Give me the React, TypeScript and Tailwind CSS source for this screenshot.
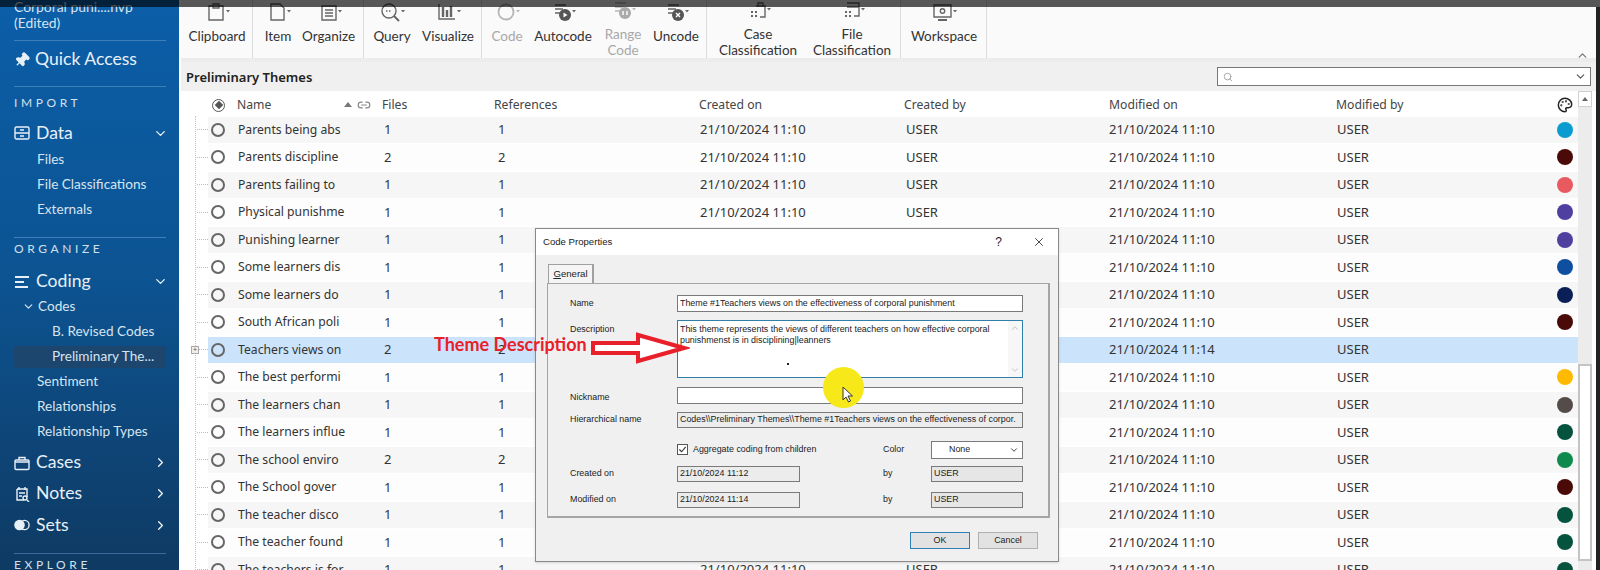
import { ChevronDown, ChevronRight, ChevronUp, Link2, Palette, Pin, Search, X } from 'lucide-react';
import type { ReactNode } from 'react';

const rows = [
  { name: 'Parents being abs', files: 1, refs: 1, color: '#0a9bd0' },
  { name: 'Parents discipline', files: 2, refs: 2, color: '#4a0a08' },
  { name: 'Parents failing to', files: 1, refs: 1, color: '#e85a5f' },
  { name: 'Physical punishme', files: 1, refs: 1, color: '#4f3f9f' },
  { name: 'Punishing learner', files: 1, refs: 1, color: '#4f3f9f' },
  { name: 'Some learners dis', files: 1, refs: 1, color: '#0f4f9f' },
  { name: 'Some learners do', files: 1, refs: 1, color: '#0a1f55' },
  { name: 'South African poli', files: 1, refs: 1, color: '#4a0a08' },
  { name: 'Teachers views on', files: 2, refs: 2, color: '' },
  { name: 'The best performi', files: 1, refs: 1, color: '#ffb900' },
  { name: 'The learners chan', files: 1, refs: 1, color: '#544c48' },
  { name: 'The learners influe', files: 1, refs: 1, color: '#05533f' },
  { name: 'The school enviro', files: 2, refs: 2, color: '#0f8a4c' },
  { name: 'The School gover', files: 1, refs: 1, color: '#4a0a08' },
  { name: 'The teacher disco', files: 1, refs: 1, color: '#05533f' },
  { name: 'The teacher found', files: 1, refs: 1, color: '#05533f' },
  { name: 'The teachers is for', files: 1, refs: 1, color: '#05533f' },
];

function Ico({ children, muted }: { children: ReactNode; muted?: boolean }) {
  return (
    <svg
      viewBox="0 0 30 20"
      className={`h-[20px] w-[30px] ${muted ? 'text-[#b5b5b5]' : 'text-[#666]'}`}
      fill="none"
      stroke="currentColor"
      strokeWidth="1.4"
    >
      {children}
      <path d="M24 8h4l-2 2.5z" fill="currentColor" stroke="none" />
    </svg>
  );
}

function Tool({ label, width, icon, muted }: { label: ReactNode; width: string; icon: ReactNode; muted?: boolean }) {
  return (
    <div className={`flex shrink-0 flex-col items-center ${width}`}>
      <div className="flex h-[28px] items-end pb-[6px]">{icon}</div>
      <div className={`text-center leading-[16px] ${muted ? 'text-[#a8a8a8]' : 'text-[#333]'}`}>{label}</div>
    </div>
  );
}

function Ribbon() {
  const group = 'flex h-[58px] shrink-0 border-r border-[#dcdcdc]';
  return (
    <div className="relative h-[62px] shrink-0 border-b-4 border-[#ececec] bg-[#fafafa] font-['Lato',sans-serif] text-[13.5px]">
      <div className="flex">
        <div className={`${group} w-[72px]`}>
          <Tool
            width="w-[72px]"
            label="Clipboard"
            icon={
              <Ico>
                <path d="M7 4h14v14H7z" />
                <path d="M11 2h6v4h-6z" />
              </Ico>
            }
          />
        </div>
        <div className={`${group} w-[111px]`}>
          <Tool
            width="w-[50px]"
            label="Item"
            icon={
              <Ico>
                <path d="M8 2h9l4 4v12H8z" />
              </Ico>
            }
          />
          <Tool
            width="w-[51px]"
            label="Organize"
            icon={
              <Ico>
                <path d="M8 4h14v14H8z" />
                <path d="M11 8h8M11 11h8M11 14h8" />
              </Ico>
            }
          />
        </div>
        <div className={`${group} w-[118px]`}>
          <Tool
            width="w-[56px]"
            label="Query"
            icon={
              <Ico>
                <circle cx="12" cy="9" r="7" />
                <path d="M17 14l5 5" strokeWidth="2" />
                <path d="M9 9h6" strokeDasharray="1.5 1.5" />
              </Ico>
            }
          />
          <Tool
            width="w-[56px]"
            label="Visualize"
            icon={
              <Ico>
                <path d="M6 2v15h16" />
                <path d="M10 5v10M14 8v7M18 4v11" strokeWidth="2.4" />
              </Ico>
            }
          />
        </div>
        <div className={`${group} w-[225px]`}>
          <Tool
            muted
            width="w-[50px]"
            label="Code"
            icon={
              <Ico muted>
                <circle cx="14" cy="10" r="7.5" strokeWidth="1.8" />
              </Ico>
            }
          />
          <Tool
            width="w-[62px]"
            label="Autocode"
            icon={
              <Ico>
                <path d="M7 3h11M7 7h8M7 11h5" />
                <circle cx="17" cy="13" r="6" fill="#555" stroke="none" />
                <path d="M15.5 10.5v5l4-2.5z" fill="#fff" stroke="none" />
              </Ico>
            }
          />
          <Tool
            muted
            width="w-[58px]"
            label={
              <>
                Range
                <br />
                Code
              </>
            }
            icon={
              <Ico muted>
                <path d="M7 3h11M7 7h8M7 11h5" />
                <circle cx="17" cy="13" r="6" fill="#aaa" stroke="none" />
                <path d="M15 11v4M19 11v4" stroke="#fff" />
              </Ico>
            }
          />
          <Tool
            width="w-[48px]"
            label="Uncode"
            icon={
              <Ico>
                <path d="M7 3h11M7 7h8M7 11h5" />
                <circle cx="17" cy="13" r="6" fill="#555" stroke="none" />
                <path d="M15 11l4 4M19 11l-4 4" stroke="#fff" />
              </Ico>
            }
          />
        </div>
        <div className={`${group} w-[194px]`}>
          <Tool
            width="w-[102px]"
            label={
              <>
                Case
                <br />
                Classification
              </>
            }
            icon={
              <Ico>
                <path d="M13 6h9v11h-5M15 6V3h5v3" />
                <path d="M8 11h2v2H8zM12 11h2v2h-2zM8 15h2v2H8zM12 15h2v2h-2z" fill="currentColor" stroke="none" />
              </Ico>
            }
          />
          <Tool
            width="w-[86px]"
            label={
              <>
                File
                <br />
                Classification
              </>
            }
            icon={
              <Ico>
                <path d="M10 3h12v13h-5M10 7h12" />
                <path d="M8 11h2v2H8zM12 11h2v2h-2zM8 15h2v2H8zM12 15h2v2h-2z" fill="currentColor" stroke="none" />
              </Ico>
            }
          />
        </div>
        <div className={`${group} w-[86px]`}>
          <Tool
            width="w-[86px]"
            label="Workspace"
            icon={
              <Ico>
                <path d="M5 3h17v12H5z" />
                <circle cx="13.5" cy="9" r="2.2" />
                <path d="M9 18h9" strokeWidth="2" />
              </Ico>
            }
          />
        </div>
        <div className="flex h-[58px] flex-1 items-start justify-end pr-[11px] pt-[49px] text-[#777]">
          <ChevronUp size={13} strokeWidth={2.4} />
        </div>
      </div>
    </div>
  );
}

function SideIcon({ children }: { children: ReactNode }) {
  return (
    <svg viewBox="0 0 16 16" className="h-[16px] w-[16px] shrink-0" fill="none" stroke="currentColor" strokeWidth="1.4">
      {children}
    </svg>
  );
}

function SideGroup({ icon, label, open, y }: { icon: ReactNode; label: string; open?: boolean; y: string }) {
  return (
    <div className={`flex shrink-0 items-center text-[17.6px] ${y}`}>
      <span className="flex w-[22px] items-center">{icon}</span>
      <span className="flex-1">{label}</span>
      <span className="mr-[-2px]">
        {open ? <ChevronDown size={15} strokeWidth={2.2} /> : <ChevronRight size={15} strokeWidth={2.2} />}
      </span>
    </div>
  );
}

function SideLink({ label, indent }: { label: string; indent: string }) {
  return <div className={`flex h-[25px] shrink-0 items-center text-[13.6px] text-[#d6e4f0] ${indent}`}>{label}</div>;
}

function Sidebar() {
  const heading = 'h-[18px] shrink-0 text-[12px] leading-[18px] tracking-[0.3em] text-[#d2e0ec]';
  return (
    <div className="flex h-[570px] w-[179px] shrink-0 flex-col overflow-hidden bg-gradient-to-b from-[#0b5ea8] via-[#0c5391] to-[#0e3a63] pl-[14px] pr-[13px] font-['Lato',sans-serif] text-[#e8f0f7]">
      <div className="h-[41px] shrink-0 border-b border-[#3d7fb8] text-[13.9px] leading-[16px] text-[#d6e4f0]">
        <div className="mt-[-1px]">Corporal puni....nvp</div>
        <div>(Edited)</div>
      </div>
      <div className="flex h-[46px] shrink-0 items-center gap-[5px] border-b border-[#3d7fb8] pb-[8px] text-[17.6px]">
        <Pin size={16} fill="currentColor" className="rotate-45" />
        <span>Quick Access</span>
      </div>
      <div className={`mt-[7px] ${heading}`}>IMPORT</div>
      <SideGroup
        y="mt-[9px] h-[24px]"
        label="Data"
        open
        icon={
          <SideIcon>
            <rect x="1" y="2" width="14" height="12" rx="1.5" />
            <path d="M1 8h14M6 5h4M6 11h4" />
          </SideIcon>
        }
      />
      <div className="mt-[2px] flex shrink-0 flex-col">
        <SideLink label="Files" indent="pl-[23px]" />
        <SideLink label="File Classifications" indent="pl-[23px]" />
        <SideLink label="Externals" indent="pl-[23px]" />
      </div>
      <div className="mt-[14.5px] shrink-0 border-t border-[#3d7fb8]" />
      <div className={`mt-[2px] ${heading}`}>ORGANIZE</div>
      <SideGroup
        y="mt-[12px] h-[24px]"
        label="Coding"
        open
        icon={
          <SideIcon>
            <path d="M1 3h14M1 8h9M1 13h13" strokeWidth="2.2" />
          </SideIcon>
        }
      />
      <div className="flex h-[25px] shrink-0 items-center gap-[3px] pl-[8px] text-[13.6px] text-[#d6e4f0]">
        <ChevronDown size={13} strokeWidth={2.2} />
        <span>Codes</span>
      </div>
      <SideLink label="B. Revised Codes" indent="pl-[38px]" />
      <div className="mt-[2px] flex h-[22px] shrink-0 items-center rounded-[2px] bg-[#1d466f] pl-[38px] text-[13.6px] text-[#d6e4f0]">
        Preliminary The...
      </div>
      <div className="mt-[1px] flex shrink-0 flex-col">
        <SideLink label="Sentiment" indent="pl-[23px]" />
        <SideLink label="Relationships" indent="pl-[23px]" />
        <SideLink label="Relationship Types" indent="pl-[23px]" />
      </div>
      <SideGroup
        y="mt-[3.5px] h-[31px]"
        label="Cases"
        icon={
          <SideIcon>
            <rect x="1" y="5" width="14" height="9.500" rx="1" />
            <path d="M5 5V2.500h6V5M1 7h14" />
          </SideIcon>
        }
      />
      <SideGroup
        y="h-[31px]"
        label="Notes"
        icon={
          <SideIcon>
            <path d="M3 3h10v8M3 3v11h7" />
            <path d="M5 1v3M11 1v3M5 7h6M5 10h3" />
            <circle cx="11" cy="12" r="2" />
            <path d="M13 14l2 2" />
          </SideIcon>
        }
      />
      <SideGroup
        y="h-[32px]"
        label="Sets"
        icon={
          <SideIcon>
            <circle cx="5.500" cy="8" r="4.600" fill="currentColor" />
            <circle cx="10.500" cy="8" r="4.600" />
          </SideIcon>
        }
      />
      <div className="mt-[11.5px] shrink-0 border-t border-[#3a6a97]" />
      <div className={`mt-[2px] ${heading}`}>EXPLORE</div>
    </div>
  );
}

function Circle() {
  return <span className="block h-[14px] w-[14px] rounded-full border-2 border-[#666]" />;
}

function Table() {
  return (
    <div className="relative flex-1 overflow-hidden bg-white font-['Noto_Sans',sans-serif] text-[13px] text-[#333]">
      <div className="flex h-[25px] items-center pl-[19px] pt-[3px] text-[12.2px] text-[#444]">
        <span className="flex w-[37px] justify-start pl-[12px]">
          <span className="flex h-[13px] w-[13px] items-center justify-center rounded-full border border-[#555]">
            <span className="h-[6px] w-[6px] rotate-45 bg-[#555]" />
          </span>
        </span>
        <span className="flex w-[145px] items-center">
          <span className="flex-1">Name</span>
          <span className="mr-[5px] h-0 w-0 border-x-[4px] border-b-[5px] border-x-transparent border-b-[#777]" />
          <Link2 size={14} className="mr-[11px] text-[#888]" />
        </span>
        <span className="w-[112px]">Files</span>
        <span className="w-[205px]">References</span>
        <span className="w-[205px]">Created on</span>
        <span className="w-[205px]">Created by</span>
        <span className="w-[227px]">Modified on</span>
        <span className="w-[221px]">Modified by</span>
        <Palette size={16} strokeWidth={2.2} className="text-[#222]" />
      </div>
      <div className="ml-[14px] border-l border-dotted border-[#c4c4c4]">
        {rows.map((row, i) => {
          const selected = row.name.startsWith('Teachers');
          const band = selected ? 'bg-[#cce4fb]' : i % 2 === 0 ? 'bg-[#f6f6f6]' : 'bg-[#fdfdfd]';
          return (
            <div key={row.name} className="flex h-[27.5px] items-center">
              <div className="relative flex w-[12px] shrink-0 items-center">
                <span className="ml-[1px] w-[11px] border-t border-dotted border-[#bbb]" />
                {selected && (
                  <span className="absolute left-[-5px] flex h-[8px] w-[8px] items-center justify-center border border-[#aaa] bg-[#eee] text-[7px] leading-none text-[#555]">
                    +
                  </span>
                )}
              </div>
              <div className={`flex h-[26px] flex-1 items-center ${band}`}>
                <span className="flex w-[30px] justify-start pl-[3px]">
                  <Circle />
                </span>
                <span className="w-[145px] text-[12.2px]">{row.name}</span>
                <span className="w-[112px] pl-[1px]">{row.files}</span>
                <span className="w-[205px] pl-[3px]">{row.refs}</span>
                <span className="w-[206px]">21/10/2024 11:10</span>
                <span className="w-[203px]">USER</span>
                <span className="w-[228px]">{selected ? '21/10/2024 11:14' : '21/10/2024 11:10'}</span>
                <span className="w-[220px]">USER</span>
                {row.color && <span className="h-[16px] w-[16px] rounded-full" style={{ backgroundColor: row.color }} />}
              </div>
            </div>
          );
        })}
      </div>
    </div>
  );
}

function Scrollbar() {
  return (
    <div className="flex w-[14px] shrink-0 flex-col bg-[#ececec]">
      <div className="flex h-[16px] items-center justify-center border border-[#d0d0d0] bg-white">
        <span className="h-0 w-0 border-x-[3px] border-b-[4px] border-x-transparent border-b-[#666]" />
      </div>
      <div className="mt-[257px] h-[197px] border-2 border-[#c4c4c4] bg-white" />
    </div>
  );
}

function Field({ children, className }: { children?: ReactNode; className: string }) {
  return (
    <div className={`flex items-center overflow-hidden whitespace-nowrap border border-[#7a7a7a] px-[2px] ${className}`}>
      {children}
    </div>
  );
}

function Dialog() {
  const label = 'w-[107px] shrink-0';
  return (
    <div className="absolute left-[535px] top-[228px] h-[334px] w-[524px] border border-[#8a8a8a] bg-[#f0f0f0] font-['Liberation_Sans',sans-serif] text-[8.9px] text-[#222] shadow-sm">
      <div className="flex h-[26px] items-center justify-between bg-white pl-[7px] pr-[12px] text-[9.6px]">
        <span>Code Properties</span>
        <div className="flex items-center gap-[30px]">
          <span className="text-[12px]">?</span>
          <X size={14} strokeWidth={1.4} />
        </div>
      </div>
      <div className="pl-[11px] pr-[8px] pt-[9px]">
        <div className="ml-[1px] flex h-[19px] w-[46px] items-center justify-center border-l border-r-2 border-t border-[#a0a0a0] bg-[#f5f5f5] text-[9.6px]">
          <span>
            <span className="underline">G</span>eneral
          </span>
        </div>
        <div className="flex h-[235px] flex-col border-b-2 border-l border-r-2 border-t border-[#a5a5a5] pl-[22px] pt-[11px]">
          <div className="flex h-[17px] items-center">
            <span className={label}>Name</span>
            <Field className="h-[17px] w-[346px] bg-white">Theme #1Teachers views on the effectiveness of corporal punishment</Field>
          </div>
          <div className="mt-[8px] flex h-[58px]">
            <span className={`${label} pt-[3px]`}>Description</span>
            <div className="flex h-[58px] w-[346px] border border-[#2f7fa8] bg-white">
              <div className="flex-1 whitespace-nowrap pl-[2px] pt-[3px] leading-[11px]">
                This theme represents the views of different teachers on how effective corporal
                <br />
                punishmenst is in disciplining|leanners
              </div>
              <div className="flex w-[14px] flex-col items-center justify-between bg-[#f7f7f7] py-[2px] text-[#bbb]">
                <ChevronUp size={10} />
                <ChevronDown size={10} />
              </div>
            </div>
          </div>
          <div className="mt-[9px] flex h-[17px] items-center">
            <span className={`${label} pt-[5px]`}>Nickname</span>
            <Field className="h-[17px] w-[346px] bg-white" />
          </div>
          <div className="mt-[8px] flex h-[16px] items-center">
            <span className={label}>Hierarchical name</span>
            <Field className="h-[16px] w-[346px] bg-[#ececec]">Codes\\Preliminary Themes\\Theme #1Teachers views on the effectiveness of corpor.</Field>
          </div>
          <div className="mt-[13px] flex h-[18px] items-center">
            <span className={label} />
            <span className="flex w-[206px] items-center gap-[5px]">
              <span className="flex h-[11px] w-[11px] items-center justify-center border border-[#555] bg-white">
                <svg viewBox="0 0 10 10" className="h-[9px] w-[9px]" fill="none" stroke="#333" strokeWidth="1.2">
                  <path d="M1.500 5l2.500 2.500L8.500 2" />
                </svg>
              </span>
              Aggregate coding from children
            </span>
            <span className="w-[48px]">Color</span>
            <Field className="h-[18px] w-[92px] justify-between bg-white pl-[17px] pr-[3px]">
              None
              <ChevronDown size={10} />
            </Field>
          </div>
          <div className="mt-[7px] flex h-[16px] items-center">
            <span className={label}>Created on</span>
            <Field className="h-[16px] w-[123px] bg-[#ececec]">21/10/2024 11:12</Field>
            <span className="ml-[83px] w-[48px]">by</span>
            <Field className="h-[16px] w-[92px] bg-[#e6e6e6]">USER</Field>
          </div>
          <div className="mt-[10px] flex h-[16px] items-center">
            <span className={label}>Modified on</span>
            <Field className="h-[16px] w-[123px] bg-[#ececec]">21/10/2024 11:14</Field>
            <span className="ml-[83px] w-[48px]">by</span>
            <Field className="h-[16px] w-[92px] bg-[#e6e6e6]">USER</Field>
          </div>
        </div>
        <div className="mt-[14px] flex justify-end gap-[8px] pr-[12px]">
          <div className="flex h-[17px] w-[60px] items-center justify-center border border-[#2f7fb8] bg-[#e2e2e2]">OK</div>
          <div className="flex h-[17px] w-[60px] items-center justify-center border border-[#b0b0b0] bg-[#e2e2e2]">Cancel</div>
        </div>
      </div>
    </div>
  );
}

export default function App() {
  return (
    <div className="relative flex h-[570px] w-[1600px] overflow-hidden bg-white">
      <Sidebar />
      <div className="flex min-w-0 flex-1 flex-col pl-[2px]">
        <Ribbon />
        <div className="flex h-[29px] shrink-0 items-center justify-between bg-[#f0f0f0] pl-[5px] pr-[9px]">
          <span className="pt-[2px] font-['Noto_Sans',sans-serif] text-[13px] font-semibold text-[#222]">Preliminary Themes</span>
          <div className="flex h-[19px] w-[374px] items-center justify-between border border-[#777] bg-white pl-[5px] pr-[3px] text-[#999]">
            <Search size={10} />
            <ChevronDown size={13} className="text-[#555]" />
          </div>
        </div>
        <div className="flex min-h-0 flex-1 pr-[8px]">
          <Table />
          <Scrollbar />
        </div>
      </div>
      {/* video bar, annotation and cursor sit on top of the app */}
      <div className="absolute inset-x-0 top-0 h-[7px] bg-black/65" />
      <div className="absolute bottom-0 right-0 top-[7px] w-[4px] bg-[#222]" />
      <Dialog />
      <div className="absolute left-[434px] top-[331px] font-['Lato',sans-serif] text-[18px] font-bold text-[#e8202a]">Theme Description</div>
      <svg className="absolute left-[590px] top-[332px] h-[32px] w-[100px]" viewBox="0 0 100 32" fill="#fff" stroke="#e8202a" strokeWidth="4">
        <path d="M3 11h45V3l46 13-46 13v-8H3z" />
      </svg>
      <div className="absolute left-[823px] top-[367px] h-[41px] w-[41px] rounded-full bg-[#f7e81a]" />
      <svg className="absolute left-[842px] top-[386px] h-[18px] w-[12px]" viewBox="0 0 12 18" fill="#fff" stroke="#333" strokeWidth="1">
        <path d="M1 1v13l3-3 2.500 5 2-1-2.500-5h4.500z" />
      </svg>
      <span className="absolute left-[787px] top-[363px] h-[2px] w-[2px] bg-[#222]" />
    </div>
  );
}
